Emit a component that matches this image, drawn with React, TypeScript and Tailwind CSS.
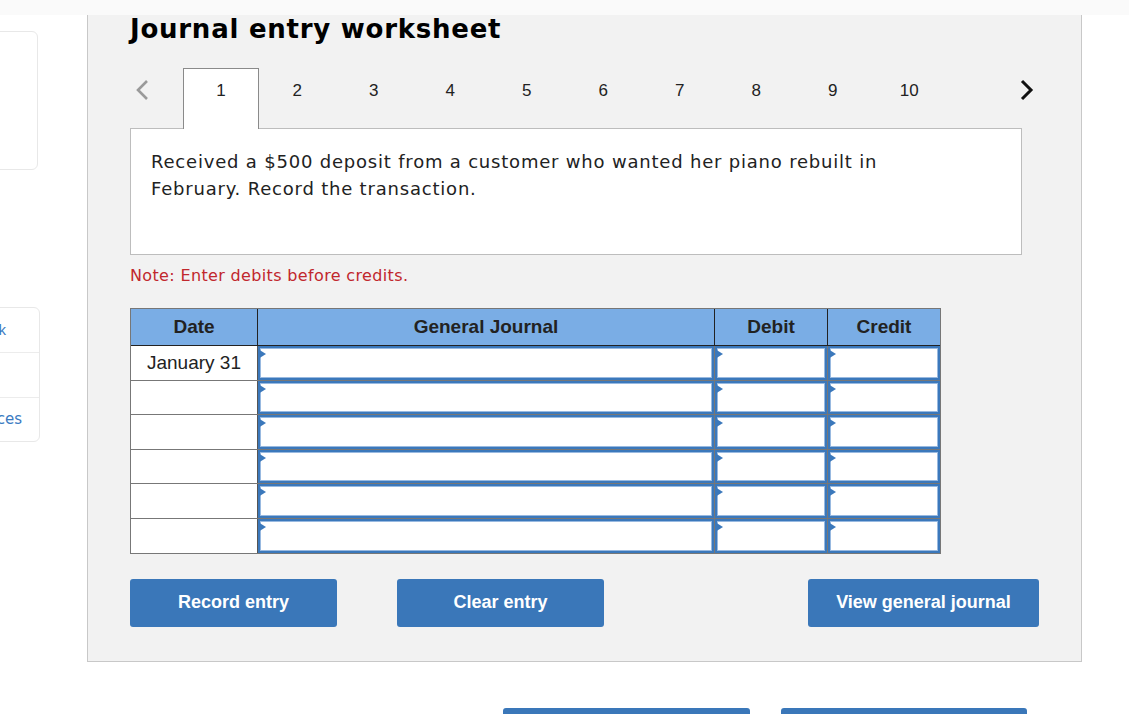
import React from "react";

const verdana = { fontFamily: '"DejaVu Sans", Verdana, sans-serif' };

function InputCell({ w }: { w: string }) {
  return (
    <div className={`${w} h-full border-r border-[#777] last:border-r-0`}>
      <div className="relative h-full border-2 border-[#3b78bb]">
        <div className="h-full border border-[#98b9e0] bg-white" />
        <svg className="absolute left-[-2px] top-[1px]" width="8" height="10" viewBox="0 0 8 10">
          <polygon points="0,0 8,5 0,10" fill="#3b78bb" />
        </svg>
      </div>
    </div>
  );
}

export default function App() {
  const tabs = ["1", "2", "3", "4", "5", "6", "7", "8", "9", "10"];
  const rowHeights = ["h-[35px]", "h-[34px]", "h-[35px]", "h-[34px]", "h-[35px]", "h-[34px]"];
  return (
    <div
      className="relative h-[727px] w-[1129px] overflow-hidden bg-white"
      style={{ fontFamily: '"Liberation Sans", Arial, sans-serif' }}
    >
      <div className="h-[15px] bg-[#fafafa]" />
      <div className="flex">
        {/* left sidebar */}
        <div className="w-[87px] shrink-0 pt-[16px]">
          <div className="ml-[-30px] h-[139px] w-[68px] rounded-[6px] border border-[#e8e8e8] bg-white" />
          <div className="ml-[-30px] mt-[137px] w-[70px] rounded-[6px] border border-[#e8e8e8] bg-white text-[15px] text-[#3a7bc2]">
            <div className="flex h-[45px] items-center justify-end border-b border-[#ececec] pr-[33px] whitespace-nowrap">
              <span>eBook</span>
            </div>
            <div className="flex h-[45px] items-center justify-end border-b border-[#ececec] pr-[33px] whitespace-nowrap">
              <span></span>
            </div>
            <div className="flex h-[43px] items-center justify-end pr-[17px] whitespace-nowrap" style={verdana}>
              <span>References</span>
            </div>
          </div>
        </div>

        {/* panel */}
        <div className="h-[647px] w-[995px] shrink-0 border-x border-b border-[#c8c8c8] bg-[#f2f2f2] px-[42px]">
          <h1
            className="mt-[-1px] text-[26px] font-bold leading-[30px] tracking-[0.75px] text-black"
            style={verdana}
          >
            Journal entry worksheet
          </h1>

          {/* tabs */}
          <div className="relative z-10 mt-[24px] flex h-[61px] items-start">
            <div className="flex h-[44px] w-[53px] items-center pl-[5px]">
              <svg width="15" height="22" viewBox="0 0 15 22">
                <path d="M12 2 L3 11 L12 20" fill="none" stroke="#9a9a9a" strokeWidth="2.6" />
              </svg>
            </div>
            {tabs.map((t, i) => (
              <div
                key={t}
                className={
                  i === 0
                    ? "h-[61px] w-[76px] border-x border-t border-[#8a8a8a] bg-white pt-[12px] text-center text-[17px] leading-[20px] text-[#222]"
                    : "h-[61px] w-[76.5px] pt-[13px] text-center text-[17px] leading-[20px] text-[#222]"
                }
              >
                {t}
              </div>
            ))}
            <div className="ml-auto mr-[5px] flex h-[44px] items-center">
              <svg width="15" height="22" viewBox="0 0 15 22">
                <path d="M3 2 L12 11 L3 20" fill="none" stroke="#111" strokeWidth="3" />
              </svg>
            </div>
          </div>

          {/* question box */}
          <div
            className="mt-[-1px] h-[127px] w-[892px] border border-[#bdbdbd] bg-white pl-[20px] pt-[19px] text-[18px] leading-[27px] tracking-[0.8px] text-[#222]"
            style={verdana}
          >
            Received a $500 deposit from a customer who wanted her piano rebuilt in
            <br />
            February. Record the transaction.
          </div>

          <div className="mt-[11px] text-[16px] leading-[20px] tracking-[0.35px] text-[#c1272d]" style={verdana}>
            Note: Enter debits before credits.
          </div>

          {/* table */}
          <div className="mt-[22px] w-[811px] border border-[#777] text-[#222]">
            <div className="flex h-[37px] border-b border-[#222] bg-[#7aade5] text-[19px] font-bold">
              <div className="flex w-[127px] items-center justify-center border-r border-[#222]">Date</div>
              <div className="flex w-[457px] items-center justify-center border-r border-[#222]">General Journal</div>
              <div className="flex w-[113px] items-center justify-center border-r border-[#222]">Debit</div>
              <div className="flex w-[112px] items-center justify-center">Credit</div>
            </div>
            {rowHeights.map((h, r) => (
              <div key={r} className={`flex ${h} ${r < 5 ? "border-b border-[#777]" : ""}`}>
                <div className="flex w-[127px] items-center justify-center border-r border-[#555] bg-white text-[19px]">
                  {r === 0 ? "January 31" : ""}
                </div>
                <InputCell w="w-[457px]" />
                <InputCell w="w-[113px]" />
                <InputCell w="w-[112px]" />
              </div>
            ))}
          </div>

          {/* buttons */}
          <div className="mt-[25px] flex text-[18px] font-bold text-white">
            <button className="h-[48px] w-[207px] rounded-[3px] bg-[#3a77b9] pb-[1px]">Record entry</button>
            <button className="ml-[60px] h-[48px] w-[207px] rounded-[3px] bg-[#3a77b9] pb-[1px]">Clear entry</button>
            <button className="ml-auto h-[48px] w-[231px] rounded-[3px] bg-[#3a77b9] pb-[1px]">View general journal</button>
          </div>
        </div>
      </div>

      {/* bottom buttons (cut off) */}
      <div className="mt-[46px] flex pl-[503px]">
        <div className="h-[6px] w-[247px] rounded-t-[3px] bg-[#3a77b9]" />
        <div className="ml-[31px] h-[6px] w-[246px] rounded-t-[3px] bg-[#3a77b9]" />
      </div>
    </div>
  );
}
